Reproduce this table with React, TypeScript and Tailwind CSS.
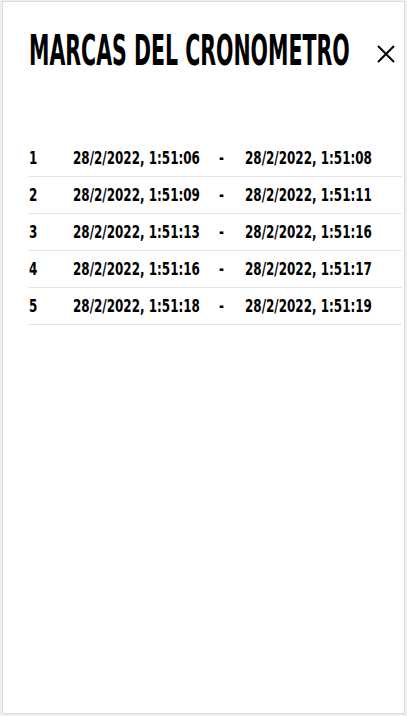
import React from 'react';

const marks = [
  { start: '28/2/2022, 1:51:06', end: '28/2/2022, 1:51:08' },
  { start: '28/2/2022, 1:51:09', end: '28/2/2022, 1:51:11' },
  { start: '28/2/2022, 1:51:13', end: '28/2/2022, 1:51:16' },
  { start: '28/2/2022, 1:51:16', end: '28/2/2022, 1:51:17' },
  { start: '28/2/2022, 1:51:18', end: '28/2/2022, 1:51:19' },
];

const font = { fontFamily: '"DejaVu Sans Condensed", "Liberation Sans", sans-serif' };

export default function App() {
  return (
    <div className="h-[716px] w-[407px] bg-[#f0f0f0] pt-px pl-[2px]" style={font}>
      <div className="h-[713px] w-[403px] border border-[#dcdcdc] bg-white">
        {/* header: condensed display face faked with a vertical stretch */}
        <div className="flex items-start justify-between pl-[26px] pr-[8px] pt-[26px]">
          <h1 className="flex h-[44px] items-center whitespace-nowrap text-[22.8px] font-bold leading-none text-black">
            <span className="inline-block scale-y-[1.89]">MARCAS DEL CRONOMETRO</span>
          </h1>
          <button className="mt-[16px] flex h-[20px] w-[20px] shrink-0 items-center justify-center text-black">
            <svg width="20" height="20" viewBox="0 0 20 20" fill="none" stroke="currentColor" strokeWidth="2">
              <path d="M2 2 L18 18 M18 2 L2 18" />
            </svg>
          </button>
        </div>

        {/* list */}
        <ul className="ml-[25px] mr-[2px] mt-[68px]">
          {marks.map((m, i) => (
            <li key={i} className="flex h-[37px] items-center border-b border-[#e6e2e6] text-[13.3px] font-bold leading-none text-black">
              <span className="w-[45px] shrink-0 pl-[1px]">
                <span className="inline-block scale-y-[1.35]">{i + 1}</span>
              </span>
              <span className="w-[146px] shrink-0 whitespace-nowrap">
                <span className="inline-block scale-y-[1.35]">{m.start}</span>
              </span>
              <span className="w-[26px] shrink-0">
                <span className="inline-block scale-y-[1.35]">-</span>
              </span>
              <span className="whitespace-nowrap">
                <span className="inline-block scale-y-[1.35]">{m.end}</span>
              </span>
            </li>
          ))}
        </ul>
      </div>
    </div>
  );
}
